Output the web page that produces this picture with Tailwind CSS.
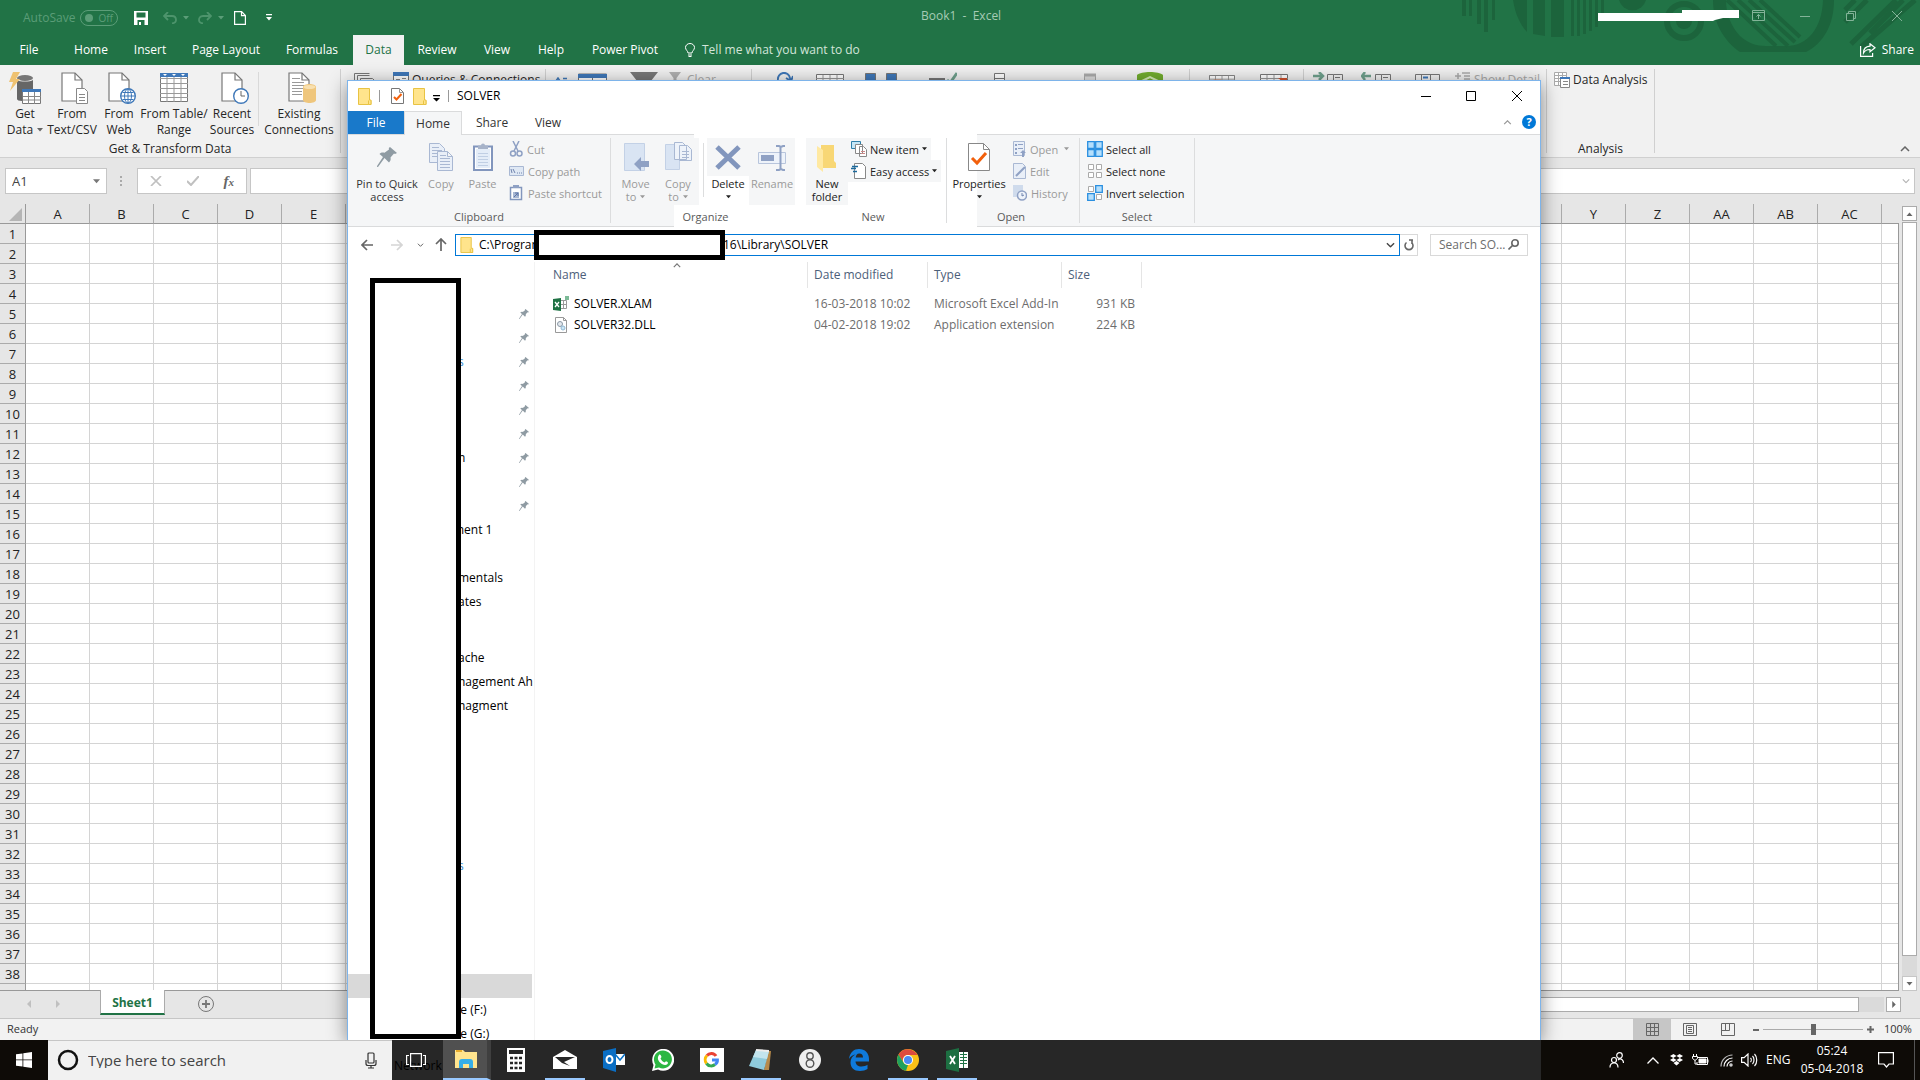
<!DOCTYPE html>
<html lang="en">
<head>
    <meta charset="UTF-8">
    <title>Book1 - Excel</title>
    <meta name="viewport" content="width=device-width, initial-scale=1.0">
    <script src="https://cdn.jsdelivr.net/npm/@tailwindcss/browser@4"></script>
</head>
<body class="relative flex h-screen flex-col overflow-hidden bg-[#e6e6e6] font-['Open_Sans','Noto_Sans',sans-serif] text-[12px] leading-4 text-[#262626]">

    <!-- Shared icons -->
    <svg class="hidden">
        <symbol id="folder" viewBox="0 0 14 17"><path d="M.5.5h11v12h1.500v4H.5z" fill="#ffe48c" stroke="#e8c343"/><path d="M10.500 12.500v4h2.500v-4.500h-1.500" fill="#ffe48c" stroke="#e8c343"/></symbol>
        <symbol id="checkdoc" viewBox="0 0 13 16"><path d="M.5.5h8l4 4v11H.5z" fill="#fff" stroke="#777"/><path d="M8.500.5v4h4" fill="none" stroke="#999"/><path d="M3 9l2.500 2.500L10.500 6" fill="none" stroke="#f2600c" stroke-width="2"/></symbol>
        <symbol id="page" viewBox="0 0 22 30"><path d="M1 1h13l7 7v21H1z" fill="#fff" stroke="#777" stroke-width="1.200"/><path d="M14 1v7h7" fill="none" stroke="#777" stroke-width="1.200"/></symbol>
        <symbol id="pin" viewBox="0 0 20 20"><path d="M13 0l7 6-2 1-1-.5-3.500 4c.5 2 0 3.500-1.500 5l-4.500-4.500L1 20l-1 0 .2-1.200L6 10 2.500 7c1.500-1.500 3-1.700 5-1.200L12 2.500 11.800 1z" fill="#8f9ba3"/></symbol>
        <symbol id="down" viewBox="0 0 6 4"><path d="M0 0h6L3 3.500z" fill="currentColor"/></symbol>
        <symbol id="chev" viewBox="0 0 10 6"><path d="M1 1l4 4 4-4" fill="none" stroke="currentColor" stroke-width="1.500"/></symbol>
        <symbol id="chevup" viewBox="0 0 10 6"><path d="M1 5l4-4 4 4" fill="none" stroke="currentColor" stroke-width="1.500"/></symbol>
        <symbol id="minitable" viewBox="0 0 28 28"><path d="M.5.5h27v27H.5z" fill="#fff" stroke="#777"/><path d="M0 4.500h28M7 1v27M14 1v27M21 1v27M0 9.500h28M0 14.500h28M0 19.500h28M0 23.500h28" stroke="#999" fill="none"/></symbol>
    </svg>

    <!-- Excel title bar -->
    <header class="relative shrink-0 bg-[#217346] text-white">
        <svg class="absolute top-0 right-0 h-[65px] w-[480px]" viewBox="0 0 480 65" fill="#1c643c">
            <path d="M22 0h4v16h-4zM29 0h3v16h-3zM37 0h4v24h-4zM44 0h4v32h-4zM52 0h3v20h-3zM73 0h14v32c-6-6-12-18-14-32zM93 0h12v36l-12-2zM111 0h13v37h-13zM131 0h3v36h-3zM137 0h3v36h-3zM143 0h3v34h-3zM149 0h3v31h-3zM155 0h3v27h-3zM161 0h3v20h-3z"/>
            <path d="M179 0h27a14 14 0 0 1-27 0z"/>
            <circle cx="244" cy="21" r="17" fill="none" stroke="#1c643c" stroke-width="6"/><circle cx="244" cy="21" r="8"/>
            <path d="M273 0h13c0 14 5 26 14 36 8 7 16 10 26 10h20c22 0 36-18 37-46h11c0 24-10 43-28 52h-66c-17-12-27-30-27-52z"/>
            <path d="M287 0l49 46M298 0l50 46M309 0l46 42M320 0l40 37" stroke="#1c643c" stroke-width="4" fill="none"/>
            <path d="M411 44l45-44M421 47l54-47M405 22l22-22M405 10l10-10M430 33l33-33" stroke="#1c643c" stroke-width="5" fill="none"/>
        </svg>
        <div class="relative flex h-[35px] items-center pb-1 text-[#5b9d78]">
            <span class="mt-1 ml-[23px] w-[57px]">AutoSave</span>
            <button class="mt-1 flex h-4 w-[38px] items-center justify-between rounded-full border border-[#5b9d78] px-1 text-[10px]"><span class="size-2 rounded-full bg-[#5b9d78]"></span>Off</button>
            <button class="mt-1 ml-4" aria-label="Save"><svg class="h-[14px] w-[14px]" viewBox="0 0 14 14"><path d="M0 0h14v14H0z" fill="#fff"/><path d="M2.500 1.500h9v5h-9zM3.500 9h7v5h-7z" fill="#217346"/><path d="M5 11h2v3H5z" fill="#fff"/></svg></button>
            <button class="mt-1 ml-[15px] flex items-center gap-[6px]" aria-label="Undo"><svg class="h-3 w-[14px]" viewBox="0 0 14 12" fill="none" stroke="#4d946c" stroke-width="1.800"><path d="M5 0L1 4l4 4M1 4h8c3 0 4 2 4 4s-1 3-4 3.500"/></svg><svg class="h-1 w-[6px]"><use href="#down"/></svg></button>
            <button class="mt-1 ml-[9px] flex items-center gap-[6px]" aria-label="Redo"><svg class="h-3 w-[14px]" viewBox="0 0 14 12" fill="none" stroke="#4d946c" stroke-width="1.800"><path d="M9 0l4 4-4 4M13 4H5C2 4 1 6 1 8s1 3 4 3.500"/></svg><svg class="h-1 w-[6px]"><use href="#down"/></svg></button>
            <button class="mt-1 ml-[10px]" aria-label="New"><svg class="h-[14px] w-3" viewBox="0 0 12 14" fill="none" stroke="#fff" stroke-width="1.200"><path d="M.6.600h7l3.800 4v8.800H.6zM7.500.6v4h4"/></svg></button>
            <button class="mt-1 ml-5" aria-label="Customize toolbar"><svg class="h-[7px] w-[6px]" viewBox="0 0 6 7" fill="#fff"><path d="M0 0h6v1.200H0zM0 3h6L3 6.500z"/></svg></button>
            <h1 class="absolute left-[921px] text-[#a5cbb5]">Book1 &nbsp;- &nbsp;Excel</h1>
            <div class="mr-[18px] ml-auto flex items-center text-[#83b398]">
                <svg class="h-3 w-[142px]" viewBox="0 0 142 12" fill="#fff"><path d="M0 3h84V0h57v8h-16l-8 2-2 1H0z"/></svg>
                <button class="ml-3" aria-label="Ribbon options"><svg class="h-[11px] w-[13px]" viewBox="0 0 13 11" fill="none" stroke="currentColor"><path d="M.5.5h12v10H.5zM.5 2.500h12M6.500 9V4.500M4.500 6.500l2-2 2 2"/></svg></button>
                <button class="ml-[35px]" aria-label="Minimize"><svg class="h-3 w-[10px]" viewBox="0 0 10 12" stroke="currentColor"><path d="M0 6.500h10"/></svg></button>
                <button class="ml-9" aria-label="Restore"><svg class="h-[10px] w-[10px]" viewBox="0 0 10 10" fill="none" stroke="currentColor"><path d="M.5 2.500h7v7h-7zM2.500 2.500v-2h7v7h-2"/></svg></button>
                <button class="ml-9" aria-label="Close"><svg class="h-[10px] w-[10px]" viewBox="0 0 10 10" stroke="currentColor"><path d="M0 0l10 10M10 0L0 10"/></svg></button>
            </div>
        </div>
        <nav class="relative flex h-[30px] items-stretch">
            <button class="ml-1 w-[50px]">File</button>
            <button class="w-[74px]">Home</button>
            <button class="w-11">Insert</button>
            <button class="w-[108px]">Page Layout</button>
            <button class="w-16">Formulas</button>
            <button class="ml-[9px] w-[51px] bg-[#f1f1f1] text-[#217346]">Data</button>
            <button class="w-[66px]">Review</button>
            <button class="w-[54px]">View</button>
            <button class="w-[54px]">Help</button>
            <button class="w-[94px]">Power Pivot</button>
            <button class="ml-[13px] flex items-center gap-[7px] text-[#d3e5da]"><svg class="h-[14px] w-[10px]" viewBox="0 0 10 14" fill="none" stroke="#fff"><path d="M3 10c0-2-2.500-3-2.500-5.500a4.500 4 0 0 1 9 0C9.500 7 7 8 7 10zM3 12h4M3.500 13.500h3"/></svg>Tell me what you want to do</button>
            <button class="mr-[6px] ml-auto flex items-center gap-[6px]"><svg class="h-[14px] w-4" viewBox="0 0 16 14" fill="none" stroke="#fff" stroke-width="1.200"><path d="M.6 3v10.400h12V10M10 .8l5 4-5 4V6.500C7 6.300 5 7.500 3.500 10c0-4 2.500-6.500 6.500-6.800z"/></svg>Share</button>
        </nav>
    </header>

    <!-- Excel ribbon -->
    <section class="flex h-[93px] shrink-0 overflow-hidden border-b border-[#d0d0d0] bg-[#f1f1f1] pt-1">
        <div class="mb-1 flex w-[341px] shrink-0 flex-col border-r border-[#d0d0d0]">
            <div class="flex min-h-0 flex-1 pt-[3px] pl-[2px] text-center">
                <button class="flex w-[46px] flex-col items-center self-start"><svg class="mb-[2px] h-8 w-8" viewBox="0 0 32 32"><ellipse cx="16" cy="6" rx="8" ry="3" fill="#777"/><path d="M8 8c3 2 13 2 16 0v9H13v12c-3 0-5-1-5-2z" fill="#666"/><path d="M4 0h7L7 7h4L1 19l3-9H0z" fill="#efc271"/><path d="M13.500 17.500h18v14h-18z" fill="#fff" stroke="#777"/><path d="M13 17h19v3H13z" fill="#3f78b9"/><path d="M14 24.500h18M14 28h18M19.500 20v12M25.500 20v12" stroke="#888"/></svg><span>Get</span><span class="flex items-center gap-1">Data <svg class="h-1 w-[6px] text-[#666]"><use href="#down"/></svg></span></button>
                <button class="flex w-12 flex-col items-center self-start"><svg class="mb-[2px] ml-[5px] h-8 w-7" viewBox="0 0 28 32"><use href="#page" width="22" height="30"/><path d="M15.500 16.500h8l3 3v12h-11z" fill="#fff" stroke="#888"/><path d="M18 22.500h6M18 25.500h6M18 28.500h6" stroke="#888"/></svg><span>From</span><span class="whitespace-nowrap">Text/CSV</span></button>
                <button class="flex w-[46px] flex-col items-center self-start"><svg class="mb-[2px] ml-[5px] h-8 w-7" viewBox="0 0 28 32"><use href="#page" width="22" height="30"/><circle cx="20" cy="24" r="7.300" fill="#fff" stroke="#3f78b9" stroke-width="1.400"/><path d="M20 17v14M13 24h14M14.500 20.500h11M14.500 27.500h11" stroke="#3f78b9"/><ellipse cx="20" cy="24" rx="3.500" ry="7" fill="none" stroke="#3f78b9"/></svg><span>From</span><span>Web</span></button>
                <button class="flex w-16 flex-col items-center self-start"><svg class="mb-[2px] h-8 w-7" viewBox="0 0 28 32"><use href="#minitable" width="28" height="28" y="2"/><path d="M0 1h28v4H0z" fill="#3f78b9"/><path d="M3 2h4l-2 2zM12 2h4l-2 2zM21 2h4l-2 2z" fill="#fff"/></svg><span class="whitespace-nowrap">From Table/</span><span>Range</span></button>
                <button class="flex w-[52px] flex-col items-center self-start"><svg class="mb-[2px] ml-[5px] h-8 w-7" viewBox="0 0 28 32"><use href="#page" width="22" height="30"/><circle cx="20" cy="24" r="7.300" fill="#fff" stroke="#3f78b9" stroke-width="1.400"/><path d="M20 19v5h4" fill="none" stroke="#666"/></svg><span>Recent</span><span>Sources</span></button>
                <span class="h-[54px] w-px bg-[#d9d9d9]"></span>
                <button class="flex w-20 flex-col items-center self-start"><svg class="mb-[2px] ml-[5px] h-8 w-7" viewBox="0 0 28 32"><use href="#page" width="22" height="30"/><path d="M4 6.500h8M4 10.500h12M4 13.500h12M4 16.500h12M4 19.500h10M4 22.500h10" stroke="#999"/><path d="M15 15c0-4 13-4 13 0v13c0 4-13 4-13 0z" fill="#efc67c"/><ellipse cx="21.500" cy="15" rx="6" ry="2" fill="#f8e0b0"/></svg><span>Existing</span><span>Connections</span></button>
            </div>
            <span class="h-2 text-center leading-2">Get &amp; Transform Data</span>
        </div>
        <div class="mb-1 flex w-[205px] shrink-0 items-start border-r border-[#d0d0d0] pt-[3px]">
            <svg class="ml-[13px] h-7 w-6" viewBox="0 0 24 28" fill="#f4f4f4" stroke="#777"><path d="M.5 22V1.500h15M3.500 24V3.500h12M6.500 26V6.500h12l5 5V26z"/></svg>
            <svg class="ml-[15px] h-4 w-4" viewBox="0 0 16 16"><path d="M.5.5h15v15H.5z" fill="#fff" stroke="#777"/><path d="M0 0h16v4H0z" fill="#3f78b9"/><path d="M3 7.500h4M9 6.500h4M3 10.500h4M9 9.500h4" stroke="#888"/></svg>
            <span class="ml-[3px] whitespace-nowrap">Queries &amp; Connections</span>
        </div>
        <div class="mb-1 flex w-[206px] shrink-0 items-start border-r border-[#d0d0d0] pt-[3px] text-[#a8a8a8]">
            <svg class="mt-[5px] ml-2 h-4 w-4" viewBox="0 0 16 16" fill="none" stroke="#3f78b9" stroke-width="1.500"><path d="M2 4l2-3 2 3M9 1.500h4"/></svg>
            <svg class="mt-px ml-2 h-7 w-[29px]" viewBox="0 0 29 28"><path d="M.5 1h28v26H.5z" fill="#fff" stroke="#777"/><path d="M0 1h29v4H0z" fill="#3f78b9"/><path d="M14.500 5v22" stroke="#777"/></svg>
            <svg class="ml-[23px] h-7 w-7" viewBox="0 0 28 28"><path d="M0 0h28L17 14v14l-6-4V14z" fill="#777"/></svg>
            <svg class="ml-[11px] h-4 w-3" viewBox="0 0 12 16"><path d="M0 0h12L7.500 6v8L4.500 12V6z" fill="#b0b0b0"/></svg>
            <span class="ml-[6px]">Clear</span>
        </div>
        <div class="mb-1 flex w-[438px] shrink-0 items-start border-r border-[#d0d0d0] pt-[3px]">
            <svg class="ml-[25px] h-7 w-4" viewBox="0 0 16 28" fill="none" stroke="#3f78b9" stroke-width="2"><path d="M1 8a6 6 0 0 1 12-2l1 3M9 6l5 3 2-5"/></svg>
            <svg class="mt-[2px] ml-[23px] h-7 w-7"><use href="#minitable"/></svg>
            <svg class="ml-[21px] h-7 w-8" viewBox="0 0 32 28"><path d="M.5 1.500h10v24H.5zM21.500 1.500h10v24h-10z" fill="#3f78b9" stroke="#777"/></svg>
            <svg class="ml-8 h-7 w-7" viewBox="0 0 28 28" fill="none"><path d="M0 7h16" stroke="#777" stroke-width="2"/><path d="M18 8l3 3 7-10" stroke="#6fa08c" stroke-width="3"/></svg>
            <svg class="ml-[37px] h-7 w-[11px]" viewBox="0 0 11 28" fill="#fff" stroke="#777"><path d="M.5 1.500h10v24H.5zM0 6.500h11"/></svg>
            <svg class="ml-[79px] h-7 w-3" viewBox="0 0 12 28" fill="#ddd" stroke="#aaa"><path d="M.5 2.500h11v24H.5z"/><path d="M0 3h12" stroke-width="3"/></svg>
            <svg class="ml-[41px] h-7 w-[26px]" viewBox="0 0 26 28"><path d="M0 3c4-4 22-4 26 0v20H0z" fill="#72ad2e"/><path d="M5 9l8-4 8 4" fill="none" stroke="#d6ecb8" stroke-width="2"/></svg>
        </div>
        <div class="mb-1 flex w-[114px] shrink-0 items-start border-r border-[#d0d0d0] pt-[5px]">
            <svg class="ml-[19px] h-7 w-[26px]" viewBox="0 0 28 28"><use href="#minitable"/><path d="M5 5h8v6H5z" fill="#e07b4c"/></svg>
            <svg class="ml-[25px] h-7 w-7" viewBox="0 0 28 28"><use href="#minitable"/><path d="M18 4h9v7z" fill="#d0502c"/></svg>
        </div>
        <div class="mb-1 flex w-[243px] shrink-0 items-start border-r border-[#d0d0d0] pt-[3px] text-[#a8a8a8]">
            <svg class="ml-[9px] h-7 w-[30px]" viewBox="0 0 30 28" fill="none"><path d="M0 4h9M6 0l4 4-4 4" stroke="#6fa08c" stroke-width="2.500"/><path d="M14.500 28V2.500h6M20.500 2.500h9v7h-9zM22 5.500h5" stroke="#777"/></svg>
            <svg class="ml-[18px] h-7 w-[30px]" viewBox="0 0 30 28" fill="none"><path d="M10 4H1M4 0L1 4l3 4" stroke="#6fa08c" stroke-width="2.500"/><path d="M14.500 28V2.500h6M20.500 2.500h9v7h-9zM22 5.500h5" stroke="#777"/></svg>
            <svg class="ml-6 h-7 w-[25px]" viewBox="0 0 25 28" fill="none" stroke="#777"><path d="M.5 28V2.500h24v6h-18v-6M15.500 2v6"/><path d="M8 5.500h5" stroke="#3f78b9" stroke-width="2"/></svg>
            <svg class="ml-[15px] h-4 w-[15px]" viewBox="0 0 15 16" stroke="#aaa"><path d="M0 4h6M3 1v6M7 1h8M9 4h6M9 7h6M7 11h8" stroke-width="1.500"/></svg>
            <span class="ml-1 whitespace-nowrap">Show Detail</span>
        </div>
        <div class="mb-1 flex w-[108px] shrink-0 flex-col justify-between border-r border-[#d0d0d0] pt-[3px]">
            <button class="ml-[7px] flex items-center gap-[3px] whitespace-nowrap"><svg class="h-4 w-4 shrink-0" viewBox="0 0 16 16"><path d="M.5.5h12v13H.5zM.5 3.500h12M.5 6.500h12M.5 9.500h12M4.500.5v13M8.500.5v13" fill="#fff" stroke="#aaa"/><path d="M6.500 5.500h9v10h-9z" fill="#fff" stroke="#888"/><path d="M6 5h10v2H6z" fill="#3f78b9"/><path d="M9 9.500h5M9 12.500h5" stroke="#888"/></svg>Data Analysis</button>
            <span class="h-2 text-center leading-2">Analysis</span>
        </div>
        <button class="mr-[10px] mb-[5px] ml-auto self-end text-[#666]" aria-label="Collapse ribbon"><svg class="h-[6px] w-[10px]"><use href="#chevup"/></svg></button>
    </section>

    <!-- Formula bar -->
    <section class="flex h-[46px] shrink-0 items-start pt-[10px] pr-[5px] pl-[5px]">
        <div class="flex h-[26px] w-[102px] shrink-0 items-center justify-between border border-[#c6c6c6] bg-white px-[6px]">
            <input class="w-16 text-[13px] text-[#444] outline-none" aria-label="Name box" value="A1">
            <svg class="h-[5px] w-[7px] text-[#777]"><use href="#down"/></svg>
        </div>
        <svg class="mt-2 ml-[13px] h-[10px] w-[3px] shrink-0" viewBox="0 0 3 10" fill="#aaa"><path d="M0 0h2v2H0zM0 4h2v2H0zM0 8h2v2H0z"/></svg>
        <div class="ml-[14px] flex h-[26px] w-[110px] shrink-0 items-center justify-between border border-[#c6c6c6] bg-white px-3">
            <button aria-label="Cancel"><svg class="h-[10px] w-3" viewBox="0 0 12 10" stroke="#c0c0c0" stroke-width="1.700"><path d="M1 0l10 10M11 0L1 10"/></svg></button>
            <button aria-label="Enter"><svg class="h-[10px] w-3" viewBox="0 0 12 10" fill="none" stroke="#c0c0c0" stroke-width="2"><path d="M0 5l4 4 8-9"/></svg></button>
            <button class="font-['Liberation_Serif',serif] text-[15px] font-bold text-[#666] italic">f<span class="text-[11px]">x</span></button>
        </div>
        <div class="ml-[3px] flex h-[26px] flex-1 items-center border border-[#c6c6c6] bg-white pr-1">
            <input class="min-w-0 flex-1 px-1 outline-none" aria-label="Formula">
            <svg class="h-[6px] w-2 text-[#b5b5b5]" viewBox="0 0 10 6"><use href="#chev"/></svg>
        </div>
    </section>

    <!-- Worksheet -->
    <main class="flex min-h-0 flex-1">
        <div class="relative min-w-0 flex-1 overflow-hidden border-b border-[#999]">
            <table class="w-[1946px] table-fixed border-separate border-spacing-0 bg-white text-center text-[13px] text-[#222]">
                <thead>
                    <tr id="columns" class="h-5">
                        <th class="h-5 w-[26px] border-r border-b border-[#999] bg-[#e6e6e6] p-0"><svg class="mt-[2px] ml-[9px] h-[13px] w-[13px]" viewBox="0 0 13 13"><path d="M13 0v13H0z" fill="#b5b5b5"/></svg></th>
                    </tr>
                </thead>
                <tbody id="rows"></tbody>
            </table>
            <span class="absolute top-5 right-0 bottom-0 w-px bg-[#999]"></span>
        </div>
        <div class="mr-[3px] ml-[3px] flex w-[15px] flex-col pt-[2px]">
            <button class="flex h-[15px] items-center justify-center border border-[#ababab] bg-white text-[#666]" aria-label="Scroll up"><svg class="h-1 w-[7px] rotate-180"><use href="#down"/></svg></button>
            <div class="mt-px flex-1 border border-[#ababab] bg-white"></div>
            <div class="h-5 bg-[#dadada]"></div>
            <button class="flex h-[15px] items-center justify-center border border-[#c6c6c6] bg-white text-[#666]" aria-label="Scroll down"><svg class="h-1 w-[7px]"><use href="#down"/></svg></button>
        </div>
    </main>

    <!-- Sheet tabs -->
    <section class="flex h-[27px] shrink-0 items-start text-[#c0c0c0]">
        <svg class="mt-[9px] ml-[27px] h-2 w-1" viewBox="0 0 4 8"><path d="M4 0v8L0 4z" fill="currentColor"/></svg>
        <svg class="mt-[9px] ml-[25px] h-2 w-1" viewBox="0 0 4 8"><path d="M0 0v8l4-4z" fill="currentColor"/></svg>
        <button class="relative -mt-px ml-10 h-[25px] w-[65px] border-x border-b-2 border-x-[#ababab] border-b-[#217346] bg-white pt-[2px] text-[12px] font-bold text-[#217346]">Sheet1</button>
        <button class="mt-[5px] ml-[33px]" aria-label="New sheet"><svg class="h-4 w-4" viewBox="0 0 16 16" fill="none" stroke="#777"><circle cx="8" cy="8" r="7.500"/><path d="M8 4v8M4 8h8" stroke-width="1.800"/></svg></button>
        <div class="mt-[6px] ml-auto flex h-[15px] w-[500px] items-stretch">
            <div class="flex-1 border border-[#ababab] bg-white"></div>
            <div class="w-[25px] bg-[#dadada]"></div>
            <button class="ml-[2px] flex w-[15px] items-center justify-center border border-[#ababab] bg-white text-[#666]" aria-label="Scroll right"><svg class="h-[7px] w-1" viewBox="0 0 4 8"><path d="M0 0v8l4-4z" fill="currentColor"/></svg></button>
        </div>
        <span class="w-[19px]"></span>
    </section>

    <!-- Status bar -->
    <footer class="flex h-[22px] shrink-0 items-center border-t border-[#c6c6c6] bg-[#f2f2f2] pr-[9px] text-[11px] text-[#333]">
        <span class="ml-[7px] pb-px">Ready</span>
        <button class="ml-auto flex h-full w-[38px] items-center justify-center bg-[#c6c6c6]" aria-label="Normal view"><svg class="h-[13px] w-[13px]" viewBox="0 0 13 13" fill="none" stroke="#666"><path d="M.5.5h12v12H.5zM4.500 0v13M8.500 0v13M0 4.500h13M0 8.500h13"/></svg></button>
        <button class="flex w-[38px] justify-center" aria-label="Page layout view"><svg class="h-[13px] w-[14px]" viewBox="0 0 14 13" fill="none" stroke="#666"><path d="M.5.5h13v12H.5zM3.500 2.500h7v8h-7zM5 4.500h4M5 6.500h4M5 8.500h4"/></svg></button>
        <button class="flex w-[38px] justify-center" aria-label="Page break view"><svg class="h-[13px] w-[14px]" viewBox="0 0 14 13" fill="none" stroke="#666"><path d="M.5.5h13v12H.5zM.5 7.500h8v-7M4.500 0v7"/></svg></button>
        <button class="ml-[6px] h-[2px] w-[6px] bg-[#666]" aria-label="Zoom out"></button>
        <input type="range" aria-label="Zoom" min="0" max="100" value="50" class="mx-1 h-[11px] w-[100px] appearance-none bg-linear-to-b from-transparent from-45% via-[#aaa] via-50% to-transparent to-55% [&::-webkit-slider-thumb]:h-[11px] [&::-webkit-slider-thumb]:w-[5px] [&::-webkit-slider-thumb]:appearance-none [&::-webkit-slider-thumb]:bg-[#666]">
        <button aria-label="Zoom in"><svg class="h-[7px] w-[7px]" viewBox="0 0 7 7" stroke="#666" stroke-width="2"><path d="M0 3.500h7M3.500 0v7"/></svg></button>
        <span class="ml-[10px] w-[27px] pb-px">100%</span>
    </footer>

    <!-- File Explorer window -->
    <div class="absolute top-20 right-[379px] bottom-10 left-[347px] flex flex-col border border-b-0 border-[#7eb4ea] bg-white text-[11px] text-[#222] shadow-[0_4px_18px_rgba(0,0,0,0.45)]">
        <div class="flex h-[30px] shrink-0 items-center text-[12px] text-black">
            <svg class="ml-[10px] h-[17px] w-[14px]"><use href="#folder"/></svg>
            <span class="ml-[7px] h-3 w-px bg-[#999]"></span>
            <svg class="ml-[11px] h-4 w-[13px]"><use href="#checkdoc"/></svg>
            <svg class="ml-[9px] h-[17px] w-[14px]"><use href="#folder"/></svg>
            <svg class="mt-1 ml-[6px] h-[7px] w-[7px]" viewBox="0 0 7 7"><path d="M0 0h7v1.200H0zM0 3h7L3.500 6.500z"/></svg>
            <span class="ml-[8px] h-3 w-px bg-[#999]"></span>
            <span class="ml-2">SOLVER</span>
            <button class="ml-auto" aria-label="Minimize"><svg class="h-[10px] w-[10px]" viewBox="0 0 10 10" stroke="#000"><path d="M0 5.500h10"/></svg></button>
            <button class="ml-[35px]" aria-label="Maximize"><svg class="h-[10px] w-[10px]" viewBox="0 0 10 10" fill="none" stroke="#000"><path d="M.5.5h9v9h-9z"/></svg></button>
            <button class="mr-[18px] ml-9" aria-label="Close"><svg class="h-[10px] w-[10px]" viewBox="0 0 10 10" stroke="#000"><path d="M0 0l10 10M10 0L0 10"/></svg></button>
        </div>
        <nav class="flex h-6 shrink-0 items-stretch border-b border-[#dadbdc] text-[12px] text-[#333]">
            <button class="w-14 bg-[#1979ca] text-white">File</button>
            <button class="-mb-px w-[58px] border border-b-0 border-[#dadbdc] bg-[#f5f6f7]">Home</button>
            <button class="w-[60px]">Share</button>
            <button class="w-[52px]">View</button>
            <button class="ml-auto text-[#999]" aria-label="Collapse ribbon"><svg class="h-[5px] w-[9px]" viewBox="0 0 10 6"><use href="#chevup"/></svg></button>
            <button class="mt-1 mr-1 ml-[10px] size-[14px] self-start rounded-full bg-[#0078d7] text-[11px] leading-[14px] font-bold text-white">?</button>
        </nav>

        <!-- Explorer ribbon -->
        <section class="relative flex h-[92px] shrink-0 border-b border-[#dadbdc] bg-[#f5f6f7] leading-[13px] text-[#9a9a9a]">
            <div class="absolute -top-px -bottom-px left-[346px] w-[283px] bg-white"></div>
            <div class="absolute top-[70px] -bottom-px left-[326px] w-5 bg-white"></div>
            <div class="relative my-[3px] flex w-[263px] flex-col justify-between border-r border-[#dcddde] text-center">
                <div class="flex pt-[5px]">
                    <button class="flex w-[78px] flex-col items-center text-[#333]"><svg class="mt-1 mb-[9px] h-5 w-5"><use href="#pin"/></svg><span class="mt-px whitespace-nowrap">Pin to Quick</span>access</button>
                    <button class="flex w-[30px] flex-col items-center self-start"><svg class="mb-[6px] h-7 w-6 shrink-0" viewBox="0 0 24 28" fill="#e9eff8" stroke="#a9b8d3"><path d="M.5.500h10l5 5v14H.5zM3 4.500h7M3 7.500h10M3 10.500h5M3 13.500h5"/><path d="M8.500 8.500h10l5 5v14h-15zM18.500 8.500v5h5M11 12.500h6M11 15.500h10M11 18.500h10M11 21.500h10M11 24.500h10"/></svg>Copy</button>
                    <button class="flex w-[53px] flex-col items-center self-start"><svg class="mb-[6px] h-7 w-5 shrink-0" viewBox="0 0 20 28"><path d="M1 3.500h18V27H1z" fill="#fff" stroke="#8296bd" stroke-width="2"/><path d="M3 6h14v19H3z" fill="#e4edf8"/><path d="M5 6V2.500h3a2 2 0 0 1 4 0h3V6z" fill="#a7b3c9"/><path d="M5 10.500h10M5 13.500h10M5 16.500h10M5 19.500h10M5 22.500h10" stroke="#c0cfe4"/></svg>Paste</button>
                    <div class="-mt-[2px] flex flex-col gap-[6px] text-left">
                        <button class="flex h-4 items-center gap-1"><svg class="h-4 w-[14px]" viewBox="0 0 14 16" fill="none" stroke="#8fa1c4" stroke-width="1.500"><path d="M4 0l5 10M10 0L5 10"/><circle cx="4" cy="12.500" r="2.500"/><circle cx="10.500" cy="12.500" r="2.500"/></svg>Cut</button>
                        <button class="flex h-4 items-center gap-1"><svg class="h-[10px] w-[15px]" viewBox="0 0 15 10"><path d="M.5.5h14v9H.5z" fill="#dfe8f4" stroke="#a9b8d3"/><path d="M2 3l1 4M4 3l2 4M8 7h1M10 7h1M12 7h1" stroke="#6f83ad"/></svg>Copy path</button>
                        <button class="flex h-4 items-center gap-1 whitespace-nowrap"><svg class="h-4 w-[15px]" viewBox="0 0 15 16"><path d="M1.500 2.500h11v12h-11z" fill="#fff" stroke="#8296bd" stroke-width="1.500"/><path d="M4 0h6v3H4z" fill="#8fa1c4"/><path d="M4 7h6v6H4z" fill="#a9b8d3"/><path d="M5 12l4-4M6 8h3v3" fill="none" stroke="#5c74a6"/></svg>Paste shortcut</button>
                    </div>
                </div>
                <span class="text-[#5a5a5a]">Clipboard</span>
            </div>
            <div class="relative my-[3px] flex w-[189px] flex-col justify-between text-center">
                <div class="flex">
                    <button class="ml-[3px] flex w-[43px] flex-col items-center pt-[5px]"><svg class="mb-[6px] h-7 w-7 shrink-0" viewBox="0 0 28 28"><path d="M2.500.5h20v27h-20z" fill="#d9e4f3" stroke="#c3d1e6"/><path d="M12 21l7-7v4h8v6h-8v4z" fill="#8fa1c4"/></svg>Move<span class="flex items-center gap-1">to <svg class="h-1 w-[5px]"><use href="#down"/></svg></span></button>
                    <button class="flex h-[67px] w-[42px] flex-col items-center bg-[#f5f6f7] pt-[5px]"><svg class="-mt-px mb-[7px] h-7 w-7 shrink-0" viewBox="0 0 28 28"><path d="M1.500 2.500h14v25h-14z" fill="#d9e4f3" stroke="#c3d1e6"/><path d="M10.500.5h8l4 4v13h-12zM15.500 3.500h8l4 4v11h-12zM18 9.500h7M18 12.500h7M18 15.500h7" fill="#eef3fa" stroke="#a9b8d3"/></svg>Copy<span class="flex items-center gap-1">to <svg class="h-1 w-[5px]"><use href="#down"/></svg></span></button>
                    <span class="mt-[5px] ml-1 h-[54px] w-px bg-[#dcddde]"></span>
                    <button class="ml-[3px] flex h-[38px] w-[42px] flex-col items-center bg-[#f5f6f7] pt-[7px] text-[#222]"><svg class="mb-[7px] h-[25px] w-[26px] shrink-0" viewBox="0 0 26 25" stroke="#8296bd" stroke-width="5"><path d="M2 2l22 21M24 2L2 23"/></svg>Delete<svg class="mt-[5px] h-1 w-[5px] shrink-0"><use href="#down"/></svg></button>
                    <button class="flex h-[67px] w-[46px] flex-col items-center bg-[#f5f6f7] pt-[7px]"><svg class="mb-[6px] h-[26px] w-7 shrink-0" viewBox="0 0 28 26" fill="none"><path d="M.5 7.500h27v11H.5z" stroke="#b8c5dc" fill="#eef3fa"/><path d="M3 10h13v6H3z" fill="#8fa1c4"/><path d="M18 1h3l2 1 2-1h2M22.500 2v22M18 25h3l2-1 2 1h2" stroke="#8fa1c4" stroke-width="2"/></svg>Rename</button>
                </div>
                <span class="text-[#5a5a5a]">Organize</span>
            </div>
            <div class="relative my-[3px] flex w-[147px] flex-col justify-between border-r border-[#dcddde] text-center text-[#222]">
                <div class="flex">
                    <button class="ml-[6px] flex h-[67px] w-[42px] flex-col items-center bg-[#f5f6f7] pt-[6px]"><svg class="mb-[5px] h-7 w-5 shrink-0" viewBox="0 0 20 28"><path d="M4 1h13v16l2 2v5H4z" fill="#f8d775"/><path d="M0 2l6 4v22l-6-5z" fill="#ffe9a2"/></svg>New<span>folder</span></button>
                    <div class="flex flex-col items-start">
                        <button class="flex h-[22px] items-center gap-[3px] bg-[#f5f6f7] pr-1 pl-[3px] whitespace-nowrap"><svg class="h-4 w-4" viewBox="0 0 16 16"><path d="M.5.5h9v7h-9z" fill="#c5e6f6" stroke="#2f7ea8"/><path d="M4.500 3.500h7v9h-7zM8.500 5.500h4l3 3v7h-7z" fill="#fff" stroke="#888"/><path d="M10 10.500h4M10 12.500h4" stroke="#c88"/></svg>New item<svg class="h-1 w-[5px]"><use href="#down"/></svg></button>
                        <button class="flex h-[22px] items-center gap-[3px] bg-[#f5f6f7] pr-1 pl-[3px] whitespace-nowrap"><svg class="h-4 w-4" viewBox="0 0 16 16"><path d="M3.500.5h8l3 3v12h-11z" fill="#fff" stroke="#888"/><path d="M1 3.500h6M0 5.500h5M2 8.500h4" stroke="#1d6a9c" stroke-width="1.300"/></svg>Easy access<svg class="h-1 w-[5px]"><use href="#down"/></svg></button>
                    </div>
                </div>
                <span class="text-[#5a5a5a]">New</span>
            </div>
            <div class="relative my-[3px] flex w-[133px] flex-col justify-between border-r border-[#dcddde] text-center">
                <div class="flex pt-[5px]">
                    <button class="ml-[6px] flex w-[52px] flex-col items-center text-[#222]"><svg class="mb-[6px] h-7 w-[22px] shrink-0" viewBox="0 0 22 28"><path d="M.5.5h15l6 6v21H.5z" fill="#fff" stroke="#888"/><path d="M15.500.5v6h6" fill="none" stroke="#888"/><path d="M4 15l5 5 9-10" fill="none" stroke="#f2600c" stroke-width="3"/></svg>Properties<svg class="mt-[5px] h-1 w-[5px]"><use href="#down"/></svg></button>
                    <div class="-mt-[2px] ml-2 flex flex-col gap-[6px]">
                        <button class="flex h-4 items-center gap-1"><svg class="h-4 w-[13px]" viewBox="0 0 13 16"><path d="M.5.5h11v14H.5z" fill="#e9eff8" stroke="#a9b8d3"/><path d="M2 3h2v2H2zM2 7h2v2H2zM2 11h2v2H2zM5 3h5v1H5zM5 7h5v1H5z" fill="#8fa1c4"/><path d="M7 12l3-3 3 3h-2v4H9v-4z" fill="#8fa1c4"/></svg>Open<svg class="ml-[2px] h-1 w-[5px]"><use href="#down"/></svg></button>
                        <button class="flex h-4 items-center gap-1"><svg class="h-4 w-[13px]" viewBox="0 0 13 16"><path d="M.5.5h9l3 3v12H.5z" fill="#e9eff8" stroke="#a9b8d3"/><path d="M3 13l9-9" stroke="#8fa1c4" stroke-width="2"/></svg>Edit</button>
                        <button class="flex h-4 items-center gap-1"><svg class="h-4 w-[14px]" viewBox="0 0 14 16"><path d="M0 0h10v12H0z" fill="#cfdbec"/><circle cx="9" cy="10.500" r="4.500" fill="#eef3fa" stroke="#8fa1c4" stroke-width="1.500"/><path d="M9 8v3l2-1" stroke="#6f83ad" fill="none"/></svg>History</button>
                    </div>
                </div>
                <span class="pr-1 text-[#5a5a5a]">Open</span>
            </div>
            <div class="relative my-[3px] flex w-[115px] flex-col justify-between border-r border-[#dcddde] text-center text-[#222]">
                <div class="ml-[7px] flex flex-col gap-[6px] pt-[3px]">
                    <button class="flex h-4 items-center gap-[3px]"><svg class="h-4 w-4" viewBox="0 0 16 16" fill="#b5dffc" stroke="#2a8fe0" stroke-width="1.300"><path d="M.7.700h6.600v6.600H.7zM8.700.7h6.600v6.600H8.700zM.7 8.700h6.600v6.600H.7zM8.700 8.700h6.600v6.600H8.700z"/></svg>Select all</button>
                    <button class="flex h-4 items-center gap-[3px]"><svg class="h-4 w-4" viewBox="0 0 16 16" fill="#fff" stroke="#aaa"><path d="M1.500 1.500h5v5h-5zM9.500 1.500h5v5h-5zM1.500 9.500h5v5h-5zM9.500 9.500h5v5h-5z"/></svg>Select none</button>
                    <button class="flex h-4 items-center gap-[3px] whitespace-nowrap"><svg class="h-4 w-4" viewBox="0 0 16 16" fill="#fff" stroke="#aaa"><path d="M1.500 1.500h5v5h-5zM9.500 9.500h5v5h-5z"/><path d="M8.700.7h6.600v6.600H8.700zM.7 8.700h6.600v6.600H.7z" fill="#b5dffc" stroke="#2a8fe0" stroke-width="1.300"/></svg>Invert selection</button>
                </div>
                <span class="text-[#5a5a5a]">Select</span>
            </div>
        </section>

        <!-- Address bar -->
        <section class="flex h-[35px] shrink-0 items-center text-[12px] text-black">
            <button class="ml-[13px]" aria-label="Back"><svg class="h-3 w-3" viewBox="0 0 12 12" fill="none" stroke="#666" stroke-width="1.700"><path d="M6 1L1 6l5 5M1 6h11"/></svg></button>
            <button class="ml-[18px]" aria-label="Forward"><svg class="h-3 w-3" viewBox="0 0 12 12" fill="none" stroke="#d5d5d5" stroke-width="1.700"><path d="M6 1l5 5-5 5M11 6H0"/></svg></button>
            <button class="ml-[14px] text-[#666]" aria-label="Recent locations"><svg class="h-1 w-[7px]" viewBox="0 0 10 6"><use href="#chev"/></svg></button>
            <button class="ml-[11px]" aria-label="Up"><svg class="h-[13px] w-3" viewBox="0 0 12 13" fill="none" stroke="#666" stroke-width="1.700"><path d="M1 6l5-5 5 5M6 1v12"/></svg></button>
            <div class="ml-2 flex h-[22px] min-w-0 flex-1 items-center border border-[#0078d7]">
                <svg class="ml-1 h-4 w-[14px] shrink-0"><use href="#folder"/></svg>
                <span class="ml-[5px] w-[55px] shrink-0">C:\Program</span>
                <span class="relative z-10 -my-2 h-[30px] w-[191px] shrink-0 border-[5px] border-black bg-white"></span>
                <span class="-ml-[2px]">16\Library\SOLVER</span>
                <svg class="mr-1 ml-auto h-[6px] w-[9px] text-[#444]" viewBox="0 0 10 6"><use href="#chev"/></svg>
            </div>
            <button class="flex h-[22px] w-[18px] items-center justify-center border border-l-0 border-[#d9d9d9]" aria-label="Refresh"><svg class="h-3 w-[10px]" viewBox="0 0 10 12" fill="none" stroke="#666" stroke-width="1.600"><path d="M2.500 3.500a4 4 0 1 0 5 0M5 1h4M8 1v4"/></svg></button>
            <div class="mr-3 ml-3 flex h-[22px] w-[98px] items-center justify-between border border-[#d9d9d9] pr-2 pl-2">
                <input class="w-[66px] outline-none placeholder:text-[#6d6d6d]" aria-label="Search" placeholder="Search SO...">
                <svg class="h-[11px] w-[11px] shrink-0" viewBox="0 0 11 11" fill="none" stroke="#666" stroke-width="1.600"><circle cx="7" cy="4" r="3.200"/><path d="M4.500 6.500L.5 10.500"/></svg>
            </div>
        </section>

        <div class="relative flex min-h-0 flex-1">
            <!-- Navigation pane -->
            <aside class="relative w-[187px] shrink-0 border-r border-[#f3f3f3] pt-10 text-[12px] text-black">
                <ul id="tree"></ul>
                <div class="absolute top-4 bottom-px left-[22px] w-[91px] border-[5px] border-black bg-white"></div>
            </aside>
            <!-- File list -->
            <table class="h-fit table-fixed border-separate border-spacing-0 text-left text-[12px] text-[#6d6d6d]">
                <thead>
                    <tr class="h-[26px] text-[#4c607a]">
                        <th class="relative w-[273px] border-r border-[#e5e5e5] pl-[18px] font-normal">Name<svg class="absolute top-px left-[138px] h-[5px] w-2 text-[#777]" viewBox="0 0 10 6"><use href="#chevup"/></svg></th>
                        <th class="w-[120px] border-r border-[#e5e5e5] pl-[6px] font-normal">Date modified</th>
                        <th class="w-[134px] border-r border-[#e5e5e5] pl-[6px] font-normal">Type</th>
                        <th class="w-[80px] border-r border-[#e5e5e5] pl-[6px] font-normal">Size</th>
                    </tr>
                </thead>
                <tbody class="whitespace-nowrap">
                    <tr class="h-[5px]"><td colspan="4"></td></tr>
                    <tr class="h-[21px]">
                        <td class="pl-[18px] text-black"><span class="flex items-center gap-[5px]"><svg class="h-4 w-4" viewBox="0 0 16 16"><path d="M7.500 4.500h6v8h-6zM7 8.500h7M10.500 4v9" fill="#fff" stroke="#999"/><path d="M0 3l8-1v13l-8-1z" fill="#1f7244"/><path d="M2 6l4 5M6 6l-4 5" stroke="#fff" stroke-width="1.300"/><path d="M12 0h4v4h-4z" fill="#7cba97"/></svg>SOLVER.XLAM</span></td>
                        <td class="pl-[6px]">16-03-2018 10:02</td>
                        <td class="pl-[6px]">Microsoft Excel Add-In</td>
                        <td class="pr-[7px] text-right">931 KB</td>
                    </tr>
                    <tr class="h-[21px]">
                        <td class="pl-[18px] text-black"><span class="flex items-center gap-[5px]"><svg class="h-4 w-4" viewBox="0 0 16 16"><path d="M2.500.5h8l3 3v12h-11z" fill="#fff" stroke="#999"/><path d="M10.500.5v3h3" fill="none" stroke="#999"/><circle cx="7" cy="7" r="2.500" fill="#e3e9ee" stroke="#8a98a5"/><circle cx="10" cy="11" r="2" fill="#cde6f5" stroke="#8fb8d3"/></svg>SOLVER32.DLL</span></td>
                        <td class="pl-[6px]">04-02-2018 19:02</td>
                        <td class="pl-[6px]">Application extension</td>
                        <td class="pr-[7px] text-right">224 KB</td>
                    </tr>
                </tbody>
            </table>
        </div>
    </div>

    <!-- Taskbar -->
    <footer class="relative flex h-10 shrink-0 items-stretch bg-[#0e0b07] text-white">
        <button class="flex w-12 items-center justify-center" aria-label="Start"><svg class="h-4 w-4" viewBox="0 0 16 16" fill="#fff"><path d="M0 2.300l6.500-.9v6.100H0zM7.300 1.300L16 0v7.500H7.300zM0 8.300h6.500v6.200L0 13.700zM7.300 8.300H16V16l-8.700-1.300z"/></svg></button>
        <div class="flex w-[344px] items-center border-t border-[#c6c6c6] bg-[#f1f1f1] pb-px">
            <svg class="ml-[9px] h-[22px] w-[22px]" viewBox="0 0 22 22" fill="none" stroke="#111" stroke-width="2.500"><circle cx="11" cy="11" r="9"/></svg>
            <input class="ml-[9px] w-[200px] flex-1 text-[15px] outline-none placeholder:text-[#444]" aria-label="Search" placeholder="Type here to search">
            <svg class="mr-[15px] h-[17px] w-3" viewBox="0 0 12 17" fill="none" stroke="#333" stroke-width="1.200"><rect x="3" y="1" width="6" height="10" rx="1"/><path d="M1 8v3.500c0 1.500 1 2 2 2h6c1 0 2-.5 2-2V8M6 13.500V16M3 16h6"/></svg>
        </div>
        <div class="flex flex-1 items-stretch bg-[#272727]">
            <button class="relative flex w-[51px] items-center justify-center" aria-label="Task view"><span class="absolute bottom-[6px] left-[2px] text-[12px] text-black">Network</span><svg class="relative -left-[2px] h-[14px] w-5" viewBox="0 0 20 14" fill="none" stroke="#fff" stroke-width="1.200"><path d="M4.600.6h10.800v12.800H4.600zM3 2.500H.6v9H3M17 2.500h2.400v9H17"/></svg></button>
            <button class="flex w-12 items-center justify-center border-r-4 border-b-2 border-r-[#3f3f3f] border-b-[#99c9ff] bg-[#505050]" aria-label="File Explorer"><svg class="ml-[2px] h-[18px] w-[22px]" viewBox="0 0 22 18"><path d="M0 0h8l2 2h12v16H0z" fill="#ffe48e"/><path d="M1 1h6" stroke="#e9ad2d" stroke-width="2"/><path d="M4 18v-6c0-2 1-3 3-3h8c2 0 3 1 3 3v6h-4v-4H8v4z" fill="#35aee8"/></svg></button>
            <button class="flex w-[49px] items-center justify-center" aria-label="Calculator"><svg class="h-6 w-[18px]" viewBox="0 0 18 24"><path d="M0 0h18v24H0z" fill="#fff"/><path d="M2 2h14v4H2z" fill="#272727"/><path d="M3 10h12M3 15h12M3 20h12" stroke="#272727" stroke-width="2.500" stroke-dasharray="3 1.500"/></svg></button>
            <button class="relative flex w-[49px] items-center justify-center" aria-label="Mail"><svg class="h-5 w-6" viewBox="0 0 24 20"><path d="M0 7l12-7 12 7v12H0z" fill="#fff"/><path d="M2 7h20L11 12l6 4-8-3z" fill="#272727"/></svg><span class="absolute bottom-0 left-[5px] h-[2px] w-10 bg-[#99c9ff]"></span></button>
            <button class="flex w-[49px] items-center justify-center" aria-label="Outlook"><svg class="h-6 w-[22px]" viewBox="0 0 22 24"><path d="M12 6h10v11H12z" fill="#fff"/><path d="M12 6l5 6 5-6" fill="none" stroke="#0a72c9" stroke-width="1.500"/><path d="M0 3l13-3v24L0 20z" fill="#0a6ec4"/><ellipse cx="6.500" cy="11.500" rx="3" ry="3.500" fill="none" stroke="#fff" stroke-width="2"/></svg></button>
            <button class="flex w-[49px] items-center justify-center" aria-label="WhatsApp"><svg class="h-[22px] w-[22px]" viewBox="0 0 22 22"><path d="M0 22l1.500-6A11 11 0 1 1 6 20.500z" fill="#fff"/><path d="M2.500 19.500l1-4A9 9 0 1 1 7 18.500z" fill="#2cb742"/><path d="M7 6c1-1 2 0 2.500 2l-1 1.500c1 2 2 3 4 4l1.500-1.200c2 .7 2.500 1.500 1.500 2.700-2 2-5.500.5-7.500-1.500S5 8.500 7 6z" fill="#fff"/></svg></button>
            <button class="flex w-[49px] items-center justify-center" aria-label="Google"><svg class="h-6 w-6" viewBox="0 0 24 24" fill="none" stroke-width="3"><path d="M0 0h24v24H0z" fill="#fff"/><path d="M16 8a5.500 5.500 0 0 0-9-.5" stroke="#ea4335"/><path d="M7 7.500a6 6 0 0 0-.5 8" stroke="#fbbc05"/><path d="M6.500 15.500a5.800 5.800 0 0 0 8.500 1" stroke="#34a853"/><path d="M15 16.500c2-1.500 2.500-3 2.400-4.500H12" stroke="#4285f4"/></svg></button>
            <button class="relative flex w-[49px] items-center justify-center" aria-label="Notepad"><svg class="h-[22px] w-[23px]" viewBox="0 0 23 22"><path d="M19 2l3 0-2 19-5 0z" fill="#b78a4a"/><path d="M7 1l13 1-5 19L0 17z" fill="#8fcbdc"/><path d="M7 1l13 1-2 8L4 8z" fill="#c3e5ee"/><path d="M7 1l13 1" stroke="#eee" stroke-width="2"/></svg><span class="absolute bottom-0 left-[5px] h-[2px] w-10 bg-[#99c9ff]"></span></button>
            <button class="flex w-[49px] items-center justify-center" aria-label="Eight"><svg class="h-[22px] w-[22px]" viewBox="0 0 22 22" fill="none" stroke="#555" stroke-width="1.400"><circle cx="11" cy="11" r="11" fill="#eee" stroke="none"/><circle cx="11" cy="7" r="3.200"/><circle cx="11" cy="14.500" r="3.800"/></svg></button>
            <button class="flex w-[49px] items-center justify-center" aria-label="Edge"><svg class="h-[22px] w-5" viewBox="0 0 20 22"><path d="M0 10C1 3 5 0 10 0c6 0 10 4 10 10v2.500H6.500c.2 3 2.500 5 6 5 2.500 0 4.500-.8 6-1.700V20c-2 1.200-4.500 2-7.500 2C5 22 1.500 18.500 1.500 13.500c0-4 2-6.500 5-8C3.500 6 1.500 7.500 0 10zm6.700-1.500H14c0-2.500-1.300-4-3.700-4S7 6.200 6.700 8.500z" fill="#0f7adb"/></svg></button>
            <button class="relative flex w-[49px] items-center justify-center" aria-label="Chrome"><svg class="h-[22px] w-[22px]" viewBox="0 0 22 22"><circle cx="11" cy="11" r="11" fill="#fbc116"/><path d="M1.500 5.500A11 11 0 0 1 20.500 6H11a5 5 0 0 0-4.500 7.500z" fill="#dd4b3e"/><path d="M1.500 5.500l5 8A5 5 0 0 0 11 16l-2 5.800A11 11 0 0 1 1.500 5.500z" fill="#1fa15d"/><circle cx="11" cy="11" r="5" fill="#fff"/><circle cx="11" cy="11" r="4" fill="#4a8af4"/></svg><span class="absolute bottom-0 left-[5px] h-[2px] w-10 bg-[#99c9ff]"></span></button>
            <button class="relative flex w-[49px] items-center justify-center" aria-label="Excel"><svg class="h-6 w-[22px]" viewBox="0 0 22 24"><path d="M11 4h11v16H11z" fill="#fff"/><path d="M14 6.500h7M14 9.500h7M14 12.500h7M14 15.500h7M17.500 4v16" stroke="#217346"/><path d="M0 3l13-3v24L0 21z" fill="#1d6f42"/><path d="M4 8l5 8M9 8l-5 8" stroke="#fff" stroke-width="1.800"/></svg><span class="absolute bottom-0 left-[5px] h-[2px] w-10 bg-[#99c9ff]"></span></button>
        </div>
        <div class="flex w-[379px] items-center">
            <svg class="ml-[68px] h-4 w-[15px]" viewBox="0 0 15 16" fill="none" stroke="#fff" stroke-width="1.200"><circle cx="10.500" cy="3.500" r="2.800"/><circle cx="5" cy="8" r="2.500"/><path d="M1 15.500c0-6 8-6 8 0M9 8c3-2.500 5.500 0 5.500 3"/></svg>
            <svg class="ml-[23px] h-[7px] w-3" viewBox="0 0 12 7" fill="none" stroke="#fff" stroke-width="1.300"><path d="M.5 6.500l5.500-5.500 5.500 5.500"/></svg>
            <svg class="ml-[11px] h-3 w-[13px]" viewBox="0 0 13 12" fill="#fff"><path d="M3.500 0l3 2-3.200 2L0 2zM9.500 0l3.500 2-3.200 2-3.300-2zM0 6l3.300-2 3.200 2-3 2zM6.500 6l3.300-2L13 6 9.500 8zM3.500 9l3-2 3 2-3 2.500z"/></svg>
            <svg class="ml-[9px] h-3 w-[17px]" viewBox="0 0 17 12" fill="none" stroke="#fff"><path d="M6 3.500h9.500v7H5V8M17 5.500v3"/><path d="M7 5h7v4H7z" fill="#fff"/><path d="M1.500 0v2M4.500 0v2M.5 2.500h5v2l-2 1.500h-1L.5 4.500zM3 6v4h2"/></svg>
            <svg class="ml-[11px] h-[13px] w-[13px]" viewBox="0 0 13 13" fill="none" stroke="#bbb" stroke-width="1.200"><path d="M1 12.500A11.500 11.500 0 0 1 12.500 1"/><path d="M4 12.500A8.500 8.500 0 0 1 12.500 4M7 12.500a5.500 5.500 0 0 1 5.500-5.500" stroke="#fff"/><circle cx="11" cy="11" r="1.200" fill="#fff"/></svg>
            <svg class="ml-2 h-[14px] w-[17px]" viewBox="0 0 17 14" fill="none" stroke="#fff" stroke-width="1.200"><path d="M.6 4.600h2.500L7 1v12L3.100 9.400H.6zM9.500 5c1 1 1 3 0 4M11.500 3c2 2 2 6 0 8M13.500 1c3 3 3 9 0 12"/></svg>
            <span class="ml-2 w-[26px] text-[12px]">ENG</span>
            <div class="ml-2 w-[64px] text-center text-[12px] leading-[18px]"><div>05:24</div><div>05-04-2018</div></div>
            <svg class="ml-[14px] h-4 w-4" viewBox="0 0 16 16" fill="none" stroke="#fff" stroke-width="1.200"><path d="M.6.600h14.800v11.400H11L8.500 15 6 12H.6z"/></svg>
            <span class="ml-5 h-full w-px bg-[#555]"></span>
        </div>
    </footer>

    <script>
        // Column letters A..AC (plus a cut-off last column) and the rows of the worksheet
        const columns = document.getElementById("columns");
        const rows = document.getElementById("rows");
        const letters = [];

        for (let i = 0; i < 30; i++) {
            letters.push(i < 26 ? String.fromCharCode(65 + i) : "A" + String.fromCharCode(39 + i));
        }

        columns.innerHTML += letters.map(letter =>
            `<th class="h-5 w-16 border-r border-b border-r-[#ababab] border-b-[#999] bg-[#e6e6e6] p-0 font-normal leading-[18px]">${letter === "AD" ? "" : letter}</th>`
        ).join("");

        for (let r = 1; r <= 39; r++) {
            const cells = letters.map(() => `<td class="h-5 border-r border-b border-[#d4d4d4] p-0"></td>`).join("");
            rows.innerHTML += `<tr class="h-5"><th class="h-5 border-r border-b border-r-[#999] border-b-[#ababab] bg-[#e6e6e6] p-0 font-normal leading-[18px]">${r < 39 ? r : ""}</th>${cells}</tr>`;
        }

        // Navigation pane entries: null is an empty row, "-" a group gap
        const pinned = text => ({ text, pin: true });
        const tree = [
            pinned(""), pinned(""), { text: "s", pin: true, blue: true }, pinned(""), pinned(""), pinned(""), pinned("n"), pinned(""), pinned(""),
            { text: "ment 1", tucked: true }, null, { text: "mentals" }, { text: "ates" }, null, "-",
            { text: "ache" }, { text: "nagement Ah" }, { text: "nagment" },
            null, null, null, null, null, "-", "-", { text: "s", blue: true }, null, null, null, null,
            "selected", { text: "ne (F:)", tucked: true }, { text: "ne (G:)", tucked: true }
        ];

        document.getElementById("tree").innerHTML = tree.map(item => {
            if (item === null) return `<li class="h-6"></li>`;
            if (item === "-") return `<li class="h-2"></li>`;
            if (item === "selected") return `<li class="mr-[2px] h-6 bg-[#d9d9d9]"></li>`;
            const indent = item.tucked ? "pl-[105px]" : "pl-[110px]";
            const color = item.blue ? "text-[#3a8fd6]" : "text-black";
            const pin = item.pin ? `<svg class="mr-[5px] ml-auto h-[10px] w-[10px]"><use href="#pin"/></svg>` : "";
            return `<li class="flex h-6 items-center whitespace-nowrap ${indent} ${color}">${item.text}${pin}</li>`;
        }).join("");
    </script>
</body>
</html>
